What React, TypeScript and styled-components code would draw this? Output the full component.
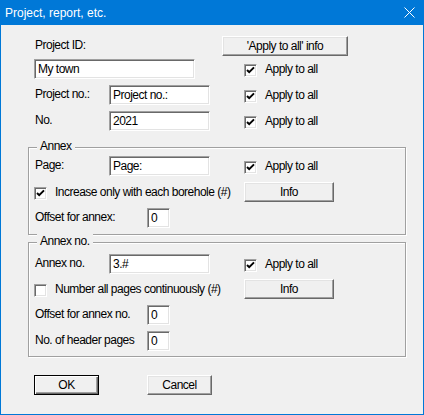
import styled, { createGlobalStyle } from 'styled-components';

const GlobalStyle = createGlobalStyle`
  html, body {
    margin: 0;
    padding: 0;
    background: #f0f0f0;
  }
  * { box-sizing: border-box; }
`;

const Window = styled.div`
  width: 424px;
  height: 415px;
  display: flex;
  flex-direction: column;
  background: #f0f0f0;
  border: 1px solid #0078d7;
  border-top: none;
  font-family: "Liberation Sans", Arial, sans-serif;
  font-size: 12px;
  letter-spacing: -0.5px;
  color: #000;
`;

const TitleBar = styled.div`
  height: 25px;
  margin: 0 -1px;
  padding: 0 9px 0 5px;
  background: #0078d7;
  color: #fff;
  display: flex;
  align-items: center;
  justify-content: space-between;
  font-family: "Liberation Sans", Arial, sans-serif;
  font-size: 12px;
  letter-spacing: 0;
`;

const Body = styled.div`
  padding: 11px 17px 0 27px;
  display: flex;
  flex-direction: column;
`;

const Top = styled.div`
  padding-left: 6px;
  display: flex;
  flex-direction: column;
`;

const Row = styled.div<{ $gap?: number; $h?: number }>`
  display: grid;
  grid-template-columns: 210px auto;
  align-items: center;
  height: ${p => p.$h ?? 20}px;
  margin-top: ${p => p.$gap ?? 0}px;
`;

const Left = styled.div`
  display: flex;
  align-items: center;
`;

const Right = styled.div<{ $shift?: number }>`
  display: flex;
  align-items: center;
  margin-left: ${p => p.$shift ?? 0}px;
`;

const Label = styled.span<{ $w?: number }>`
  width: ${p => (p.$w ? `${p.$w}px` : 'auto')};
  padding-left: 1px;
  white-space: nowrap;
  margin-top: -2px;
`;

const TextBox = styled.input<{ $w: number }>`
  width: ${p => p.$w}px;
  height: 20px;
  padding: 0 3px;
  margin: 0;
  background: #fff;
  border: 1px solid;
  border-color: #a0a0a0 #fff #fff #a0a0a0;
  box-shadow: inset 1px 1px 0 #696969, inset -1px -1px 0 #e3e3e3;
  font: inherit;
  letter-spacing: inherit;
  color: #000;
  outline: none;
`;

const Button = styled.button<{ $w: number; $default?: boolean }>`
  width: ${p => p.$w}px;
  height: 20px;
  padding: 0;
  margin: 0;
  background: #f0f0f0;
  border: 1px solid;
  border-color: ${p => (p.$default ? '#000' : '#fff #696969 #696969 #fff')};
  box-shadow: ${p =>
    p.$default
      ? 'inset 1px 1px 0 #fff, inset -1px -1px 0 #696969, inset -2px -2px 0 #a0a0a0'
      : 'inset -1px -1px 0 #a0a0a0, inset 1px 1px 0 #e3e3e3'};
  font: inherit;
  letter-spacing: inherit;
  color: #000;
  text-align: center;
`;

const CheckWrap = styled.label`
  display: flex;
  align-items: center;
  gap: 8px;
  white-space: nowrap;
  margin-top: 2px;
`;

const Box = styled.span`
  width: 13px;
  height: 13px;
  flex: none;
  background: #fff;
  border: 1px solid;
  border-color: #a0a0a0 #fff #fff #a0a0a0;
  box-shadow: inset 1px 1px 0 #696969, inset -1px -1px 0 #e3e3e3;
  display: flex;
  align-items: center;
  justify-content: center;
`;

const CheckText = styled.span`
  margin-top: -2px;
`;

const Group = styled.div<{ $gap: number; $pt: number; $pb: number }>`
  position: relative;
  margin-top: ${p => p.$gap}px;
  padding: ${p => p.$pt}px 0 ${p => p.$pb}px 5px;
  border: 1px solid #a0a0a0;
  box-shadow: 1px 1px 0 #fff, inset 1px 1px 0 #fff;
  width: 378px;
  display: flex;
  flex-direction: column;
`;

const Legend = styled.span`
  position: absolute;
  top: -9px;
  left: 8px;
  padding: 0 3px;
  line-height: 15px;
  background: #f0f0f0;
`;

const Footer = styled.div`
  margin-top: 18px;
  padding-left: 6px;
  display: flex;
  gap: 48px;
`;

function Check({ checked, children }: { checked: boolean; children: string }) {
  return (
    <CheckWrap>
      <Box>
        {checked && (
          <svg width="9" height="9" viewBox="0 0 9 9">
            <polyline points="1,4 3.2,6.2 8,1.4" fill="none" stroke="#000" strokeWidth="2" />
          </svg>
        )}
      </Box>
      <CheckText>{children}</CheckText>
    </CheckWrap>
  );
}

function App() {
  return (
    <>
      <GlobalStyle />
      <Window>
        <TitleBar>
          <span>Project, report, etc.</span>
          <svg width="11" height="11" viewBox="0 0 11 11">
            <path d="M0.5 0.5 L10.5 10.5 M10.5 0.5 L0.5 10.5" stroke="#fff" strokeWidth="1" />
          </svg>
        </TitleBar>
        <Body>
          <Top>
            <Row>
              <Left>
                <Label>Project ID:</Label>
              </Left>
              <Right $shift={-22}>
                <Button $w={126}>'Apply to all' info</Button>
              </Right>
            </Row>
            <Row $gap={3}>
              <Left>
                <TextBox $w={161} defaultValue="My town" />
              </Left>
              <Right>
                <Check checked>Apply to all</Check>
              </Right>
            </Row>
            <Row $gap={6}>
              <Left>
                <Label $w={75}>Project no.:</Label>
                <TextBox $w={101} defaultValue="Project no.:" />
              </Left>
              <Right>
                <Check checked>Apply to all</Check>
              </Right>
            </Row>
            <Row $gap={6}>
              <Left>
                <Label $w={75}>No.</Label>
                <TextBox $w={101} defaultValue="2021" />
              </Left>
              <Right>
                <Check checked>Apply to all</Check>
              </Right>
            </Row>
          </Top>

          <Group $gap={16} $pt={8} $pb={6}>
            <Legend>Annex</Legend>
            <Row>
              <Left>
                <Label $w={75}>Page:</Label>
                <TextBox $w={101} defaultValue="Page:" />
              </Left>
              <Right>
                <Check checked>Apply to all</Check>
              </Right>
            </Row>
            <Row $gap={6}>
              <Left>
                <Check checked>Increase only with each borehole (#)</Check>
              </Left>
              <Right>
                <Button $w={90}>Info</Button>
              </Right>
            </Row>
            <Row $gap={6}>
              <Left>
                <Label $w={113}>Offset for annex:</Label>
                <TextBox $w={23} defaultValue="0" />
              </Left>
            </Row>
          </Group>

          <Group $gap={7} $pt={11} $pb={5}>
            <Legend>Annex no.</Legend>
            <Row>
              <Left>
                <Label $w={75}>Annex no.</Label>
                <TextBox $w={101} defaultValue="3.#" />
              </Left>
              <Right>
                <Check checked>Apply to all</Check>
              </Right>
            </Row>
            <Row $gap={5}>
              <Left>
                <Check checked={false}>Number all pages continuously (#)</Check>
              </Left>
              <Right>
                <Button $w={90}>Info</Button>
              </Right>
            </Row>
            <Row $gap={6}>
              <Left>
                <Label $w={113}>Offset for annex no.</Label>
                <TextBox $w={23} defaultValue="0" />
              </Left>
            </Row>
            <Row $gap={6}>
              <Left>
                <Label $w={113}>No. of header pages</Label>
                <TextBox $w={23} defaultValue="0" />
              </Left>
            </Row>
          </Group>

          <Footer>
            <Button $w={65} $default>OK</Button>
            <Button $w={65}>Cancel</Button>
          </Footer>
        </Body>
      </Window>
    </>
  );
}

export default App;
